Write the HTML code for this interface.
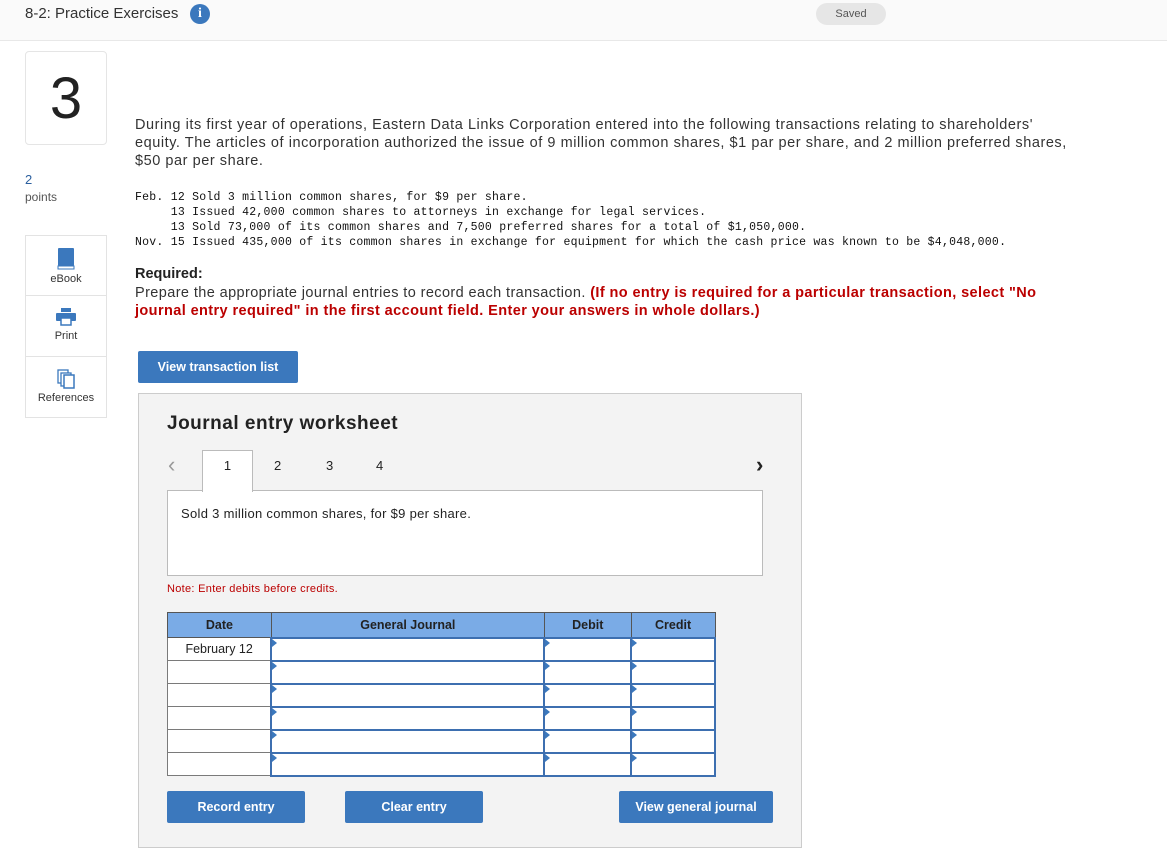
<!DOCTYPE html>
<html><head><style>
*{margin:0;padding:0;box-sizing:border-box}
body{width:1167px;height:850px;background:#fff;font-family:"Liberation Sans",sans-serif;color:#222;position:relative;overflow:hidden}
.a{position:absolute}
.mono{font-family:"Liberation Mono",monospace;font-size:11.5px;line-height:15px;white-space:pre;color:#111;letter-spacing:0.24px}
.btn{position:absolute;background:#3b78bd;color:#fff;font-weight:bold;font-size:12.5px;text-align:center;border-radius:2px}
.side{position:absolute;left:25px;width:82px;border:1px solid #e3e3e3;text-align:center;font-size:11px;color:#333}
table{border-collapse:collapse}
td{border:1px solid #7a7a7a;height:23px;font-size:12.5px;text-align:center;padding:0;position:relative}
td.in{border:2px solid #3d6fb0;background:#fff}
td.in:before{content:"";position:absolute;left:0;top:0;border-left:5px solid #3b78bd;border-top:4px solid transparent;border-bottom:4px solid transparent}
th{background:#7aabe6;border:1px solid #555;height:25px;font-size:12.5px;font-weight:bold;color:#222}
</style></head><body>
<div class="a" style="left:0;top:0;width:1167px;height:41px;background:#fafafa;border-bottom:1px solid #e8e8e8"></div>
<div class="a" style="left:25px;top:5px;font-size:15px;color:#333">8-2: Practice Exercises</div>
<div class="a" style="left:190px;top:4px;width:20px;height:20px;border-radius:50%;background:#3b78bd;color:#fff;font-weight:bold;font-size:14px;text-align:center;line-height:20px;font-family:'Liberation Serif',serif">i</div>
<div class="a" style="left:816px;top:3px;width:70px;height:22px;border-radius:11px;background:#e6e6e6;font-size:11px;color:#555;text-align:center;line-height:22px">Saved</div>
<div class="a" style="left:25px;top:51px;width:82px;height:94px;border:1px solid #e5e5e5;border-radius:4px;font-size:58px;text-align:center;line-height:94px;color:#222">3</div>
<div class="a" style="left:25px;top:172px;font-size:13px;color:#2b5f9e">2</div>
<div class="a" style="left:25px;top:190px;font-size:12px;color:#555">points</div>
<div class="side" style="top:235px;height:61px"><svg style="display:block;margin:12px auto 3px" width="18" width="18" height="22" viewBox="0 0 18 22"><rect x="1" y="0" width="16" height="18" rx="1" fill="#3b78bd"/><rect x="1" y="18" width="16" height="3" fill="none" stroke="#3b78bd" stroke-width="1"/></svg>eBook</div>
<div class="side" style="top:296px;height:61px;border-top:none"><svg style="display:block;margin:12px auto 4px" width="20" height="18" viewBox="0 0 20 18"><rect x="5" y="0" width="10" height="4" fill="#3b78bd"/><rect x="0" y="5" width="20" height="8" rx="1" fill="#3b78bd"/><rect x="5" y="10" width="10" height="7" fill="#fff" stroke="#3b78bd" stroke-width="1.5"/></svg>Print</div>
<div class="side" style="top:357px;height:61px;border-top:none"><svg style="display:block;margin:12px auto 3px" width="18" height="20" viewBox="0 0 18 20"><rect x="1" y="1" width="10" height="13" fill="#fff" stroke="#3b78bd" stroke-width="1.3"/><rect x="4" y="4" width="10" height="13" fill="#fff" stroke="#3b78bd" stroke-width="1.3"/><rect x="7" y="6" width="10" height="13" fill="#fff" stroke="#3b78bd" stroke-width="1.5"/></svg>References</div>
<div class="a" style="left:135px;top:116px;width:960px;font-size:14.5px;line-height:18px;color:#333;letter-spacing:0.55px">During its first year of operations, Eastern Data Links Corporation entered into the following transactions relating to shareholders'<br>equity. The articles of incorporation authorized the issue of 9 million common shares, $1 par per share, and 2 million preferred shares,<br>$50 par per share.</div>
<div class="a mono" style="left:135px;top:190px">Feb. 12 Sold 3 million common shares, for $9 per share.
     13 Issued 42,000 common shares to attorneys in exchange for legal services.
     13 Sold 73,000 of its common shares and 7,500 preferred shares for a total of $1,050,000.
Nov. 15 Issued 435,000 of its common shares in exchange for equipment for which the cash price was known to be $4,048,000.</div>
<div class="a" style="left:135px;top:266px;font-size:14.5px;font-weight:bold;color:#222">Required:</div>
<div class="a" style="left:135px;top:284px;width:960px;font-size:14.5px;line-height:18px;color:#333;letter-spacing:0.4px">Prepare the appropriate journal entries to record each transaction. <b style="color:#b00">(If no entry is required for a particular transaction, select "No<br>journal entry required" in the first account field. Enter your answers in whole dollars.)</b></div>
<div class="btn" style="left:138px;top:351px;width:160px;height:32px;line-height:32px">View transaction list</div>
<div class="a" style="left:138px;top:393px;width:664px;height:455px;background:#f3f3f3;border:1px solid #ccc"></div>
<div class="a" style="left:167px;top:413px;font-size:19px;font-weight:bold;color:#222;letter-spacing:0.5px">Journal entry worksheet</div>
<div class="a" style="left:168px;top:452px;font-size:22px;color:#999">&lsaquo;</div>
<div class="a" style="left:756px;top:452px;font-size:22px;color:#222;font-weight:bold">&rsaquo;</div>
<div class="a" style="left:167px;top:490px;width:596px;height:86px;background:#fff;border:1px solid #bbb"></div>
<div class="a" style="left:202px;top:450px;width:51px;height:42px;background:#fff;border:1px solid #bbb;border-bottom:none;text-align:center;line-height:30px;font-size:13px">1</div>
<div class="a" style="left:274px;top:458px;font-size:13px">2</div>
<div class="a" style="left:326px;top:458px;font-size:13px">3</div>
<div class="a" style="left:376px;top:458px;font-size:13px">4</div>
<div class="a" style="left:181px;top:506px;font-size:13px;color:#222;letter-spacing:0.3px">Sold 3 million common shares, for $9 per share.</div>
<div class="a" style="left:167px;top:583px;font-size:11px;color:#b00;letter-spacing:0.3px">Note: Enter debits before credits.</div>
<table class="a" style="left:167px;top:612px;width:549px">
<tr><th style="width:104px">Date</th><th style="width:274px">General Journal</th><th style="width:87px">Debit</th><th style="width:84px">Credit</th></tr>
<tr><td style="background:#fff">February 12</td><td class="in"></td><td class="in"></td><td class="in"></td></tr>
<tr><td style="background:#fff"></td><td class="in"></td><td class="in"></td><td class="in"></td></tr>
<tr><td style="background:#fff"></td><td class="in"></td><td class="in"></td><td class="in"></td></tr>
<tr><td style="background:#fff"></td><td class="in"></td><td class="in"></td><td class="in"></td></tr>
<tr><td style="background:#fff"></td><td class="in"></td><td class="in"></td><td class="in"></td></tr>
<tr><td style="background:#fff"></td><td class="in"></td><td class="in"></td><td class="in"></td></tr>
</table>
<div class="btn" style="left:167px;top:791px;width:138px;height:32px;line-height:32px">Record entry</div>
<div class="btn" style="left:345px;top:791px;width:138px;height:32px;line-height:32px">Clear entry</div>
<div class="btn" style="left:619px;top:791px;width:154px;height:32px;line-height:32px">View general journal</div>
</body></html>
